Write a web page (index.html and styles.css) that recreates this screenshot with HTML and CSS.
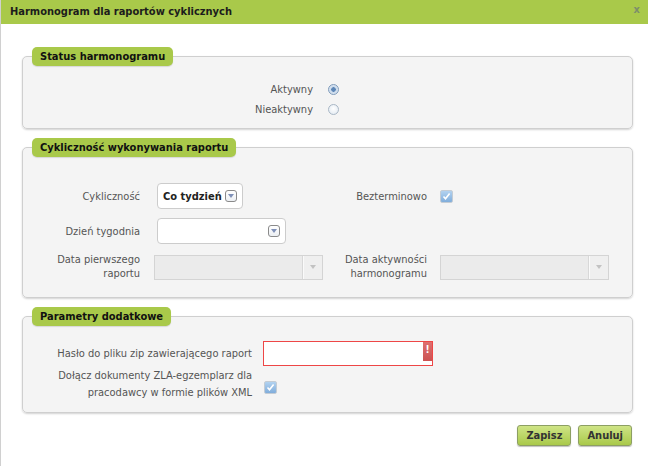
FILE: index.html
```html
<!DOCTYPE html>
<html lang="pl">
<head>
<meta charset="utf-8">
<title>Harmonogram dla raportów cyklicznych</title>
<link rel="stylesheet" href="styles.css">
</head>
<body>
<div class="dialog">
  <div class="header">
    <span class="title">Harmonogram dla raportów cyklicznych</span>
    <span class="close">x</span>
  </div>
  <div class="content">
    <fieldset class="panel panel-status">
      <legend class="tab">Status harmonogramu</legend>
      <div class="radio-row">
        <span class="label status-label">Aktywny</span>
        <span class="radio checked"></span>
      </div>
      <div class="radio-row">
        <span class="label status-label">Nieaktywny</span>
        <span class="radio"></span>
      </div>
    </fieldset>

    <fieldset class="panel panel-cycle">
      <legend class="tab">Cykliczność wykonywania raportu</legend>
      <div class="grid">
        <div class="label cell-label">Cykliczność</div>
        <div class="cell"><div class="select select-small"><span class="select-value">Co tydzień</span><span class="drop"><svg width="6" height="4" viewBox="0 0 6 4"><path d="M0 0h6L3 4z" fill="#7f90b8"/></svg></span></div></div>
        <div class="label cell-label cell-label-right">Bezterminowo</div>
        <div class="cell"><span class="checkbox checked"><svg width="9" height="9" viewBox="0 0 9 9"><path d="M1.5 4.5l2 2.2L7.6 1.6" fill="none" stroke="#fff" stroke-width="1.6"/></svg></span></div>

        <div class="label cell-label">Dzień tygodnia</div>
        <div class="cell"><div class="select select-day"><span class="select-value"></span><span class="drop"><svg width="6" height="4" viewBox="0 0 6 4"><path d="M0 0h6L3 4z" fill="#7f90b8"/></svg></span></div></div>
        <div></div>
        <div></div>

        <div class="label cell-label two-line">Data pierwszego<br>raportu</div>
        <div class="cell"><div class="disabled-select"><span class="dis-value"></span><span class="dis-drop"><svg width="6" height="4" viewBox="0 0 6 4"><path d="M0 0h6L3 4z" fill="#c2c2c2"/></svg></span></div></div>
        <div class="label cell-label cell-label-right two-line">Data aktywności<br>harmonogramu</div>
        <div class="cell"><div class="disabled-select"><span class="dis-value"></span><span class="dis-drop"><svg width="6" height="4" viewBox="0 0 6 4"><path d="M0 0h6L3 4z" fill="#c2c2c2"/></svg></span></div></div>
      </div>
    </fieldset>

    <fieldset class="panel panel-params">
      <legend class="tab">Parametry dodatkowe</legend>
      <div class="param-row">
        <div class="label param-label">Hasło do pliku zip zawierającego raport</div>
        <div class="error-input"><span class="error-mark">!</span></div>
      </div>
      <div class="param-row param-row2">
        <div class="label param-label">Dołącz dokumenty ZLA-egzemplarz dla<br>pracodawcy w formie plików XML</div>
        <span class="checkbox checked"><svg width="9" height="9" viewBox="0 0 9 9"><path d="M1.5 4.5l2 2.2L7.6 1.6" fill="none" stroke="#fff" stroke-width="1.6"/></svg></span>
      </div>
    </fieldset>

    <div class="buttons">
      <button class="btn">Zapisz</button>
      <button class="btn">Anuluj</button>
    </div>
  </div>
</div>
</body>
</html>
```

FILE: styles.css
```css
* { box-sizing: border-box; }
html, body { margin: 0; padding: 0; background: #fff; }
body {
  font-family: "DejaVu Sans Condensed", "DejaVu Sans", sans-serif;
  font-stretch: condensed;
  font-size: 11px;
  color: #555;
}
.dialog {
  width: 648px;
  height: 466px;
  border-left: 1px solid #d0d0d0;
  background: #fff;
}
.header {
  height: 24px;
  background: #a9c94a;
  display: flex;
  align-items: center;
  justify-content: space-between;
  padding: 0 8px 1px 9px;
}
.title {
  font-weight: bold;
  font-size: 11px;
  color: #1c1c1c;
}
.close {
  font-size: 11px;
  font-weight: bold;
  color: #7d8f6a;
  margin-top: -4px;
}
.content {
  padding: 23px 15px 0 21px;
}
.panel {
  margin: 0;
  padding: 0;
  border: 1px solid #cfcfcf;
  border-radius: 5px;
  background: #f4f4f4;
  box-shadow: 0 1px 2px rgba(0, 0, 0, 0.18);
  min-width: 0;
}
.tab {
  margin-left: 9px;
  padding: 0 8px;
  height: 19px;
  line-height: 19px;
  background: #a9c94a;
  border-radius: 5px;
  color: #111;
  font-weight: bold;
  font-size: 11px;
  box-shadow: 0 1px 1px rgba(0,0,0,0.12);
}
.label { color: #555; }

/* status panel */
.panel-status { padding: 13px 0 9px; }
.radio-row {
  display: flex;
  align-items: center;
  height: 20px;
}
.status-label {
  width: 290px;
  text-align: right;
}
.radio {
  margin-left: 15px;
  width: 11px;
  height: 11px;
  border-radius: 50%;
  border: 1px solid #a9b7c6;
  background: radial-gradient(circle at 50% 40%, #ffffff 0%, #e8eef4 70%);
}
.radio.checked {
  border-color: #7f9bbb;
  background: radial-gradient(circle, #5d86b6 0 2px, #c8d8ea 2.5px, #e9f0f7 100%);
}

/* cycle panel */
.panel-cycle { margin-top: 9px; padding: 26px 0 16px; }
.grid {
  display: grid;
  grid-template-columns: 131px 169px 117px 170px;
  grid-template-rows: 26px 26px 28px;
  row-gap: 9px;
  align-items: center;
}
.cell-label {
  text-align: right;
  padding-right: 14px;
}
.cell-label-right { padding-right: 13px; }
.two-line { line-height: 14px; }
.cell { display: flex; align-items: center; }
.select {
  height: 26px;
  margin-left: 3px;
  border: 1px solid #cccccc;
  border-radius: 4px;
  background: #fff;
  display: flex;
  align-items: center;
  justify-content: space-between;
  padding: 0 5px 0 5px;
}
.select-small { width: 86px; }
.select-day { width: 129px; }
.select-value {
  font-weight: bold;
  font-size: 11px;
  color: #222;
}
.drop {
  width: 12px;
  height: 12px;
  border: 1px solid #8a8a8a;
  border-radius: 3px;
  display: flex;
  align-items: center;
  justify-content: center;
  background: linear-gradient(#ffffff, #eceff3);
}
.checkbox {
  width: 13px;
  height: 13px;
  border: 1px solid #c4ccd4;
  border-radius: 2px;
  background: linear-gradient(#b2d2f0, #80addb);
  display: inline-flex;
  align-items: center;
  justify-content: center;
}
.disabled-select {
  width: 169px;
  height: 25px;
  border: 1px solid #d4d4d4;
  background: #ebebeb;
  display: flex;
}
.dis-value { flex: 1; }
.dis-drop {
  width: 20px;
  border-left: 1px solid #d8d8d8;
  background: #efefef;
  box-shadow: inset 1px 0 0 #fafafa;
  display: flex;
  align-items: center;
  justify-content: center;
}

/* params panel */
.panel-params { margin-top: 9px; padding: 15px 0 11px; }
.param-row {
  display: flex;
  align-items: center;
}
.param-label {
  width: 241px;
  padding-right: 12px;
  text-align: right;
  line-height: 17px;
}
.error-input {
  width: 170px;
  height: 25px;
  margin-left: -1px;
  border: 1px solid #ee4646;
  background: #fff;
  display: flex;
  justify-content: flex-end;
}
.error-mark {
  width: 9px;
  height: 19px;
  background: linear-gradient(#de7070, #cc5252);
  color: #fff;
  font-weight: bold;
  font-size: 10px;
  line-height: 15px;
  text-align: center;
}
.param-row2 { margin-top: 1px; }
.param-row2 .checkbox { margin-left: 0; margin-top: 7px; }

.buttons {
  display: flex;
  justify-content: flex-end;
  gap: 7px;
  margin-top: 12px;
  padding-right: 1px;
}
.btn {
  height: 21px;
  padding: 0 8px;
  border: 1px solid #8d9f63;
  border-radius: 3px;
  background: linear-gradient(#cfe486, #a9c94a);
  font-family: inherit;
  font-stretch: condensed;
  font-weight: bold;
  font-size: 11px;
  color: #333;
  box-shadow: 0 1px 1px rgba(0,0,0,0.25);
}
```
